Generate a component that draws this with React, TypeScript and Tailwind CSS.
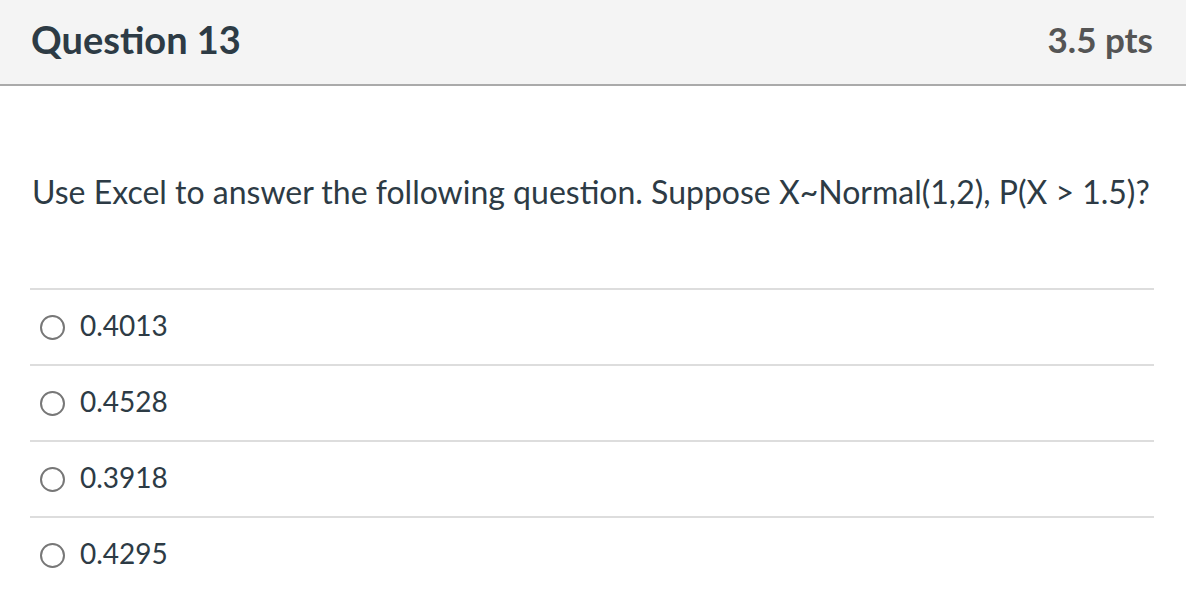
const options = ['0.4013', '0.4528', '0.3918', '0.4295'];

export default function App() {
  return (
    <div className="w-[1186px] h-[598px] bg-white overflow-hidden font-['Lato',sans-serif] text-[#2d3b45]">
      <div className="h-[86px] bg-[#f4f4f4] border-b-2 border-[#aaaaaa] flex items-center justify-between pl-[31px] pr-[33px] pb-[6px]">
        <h2 className="text-[38px] font-bold">Question 13</h2>
        <span className="text-[35px] font-bold text-[#555555]">3.5 pts</span>
      </div>
      <div className="pl-[30px] pr-[32px]">
        <p className="pt-[82px] pl-[2px] text-[32px] leading-[48px]">
          Use Excel to answer the following question. Suppose X~Normal(1,2), P(X &gt; 1.5)?
        </p>
        <div className="mt-[72px]">
          {options.map((o) => (
            <div key={o} className="h-[76px] border-t-2 border-[#dddddd] flex items-center">
              <span className="ml-[10px] w-[25px] h-[25px] rounded-full border-2 border-[#777777]" />
              <span className="ml-[15px] -mt-[4px] text-[28px]">{o}</span>
            </div>
          ))}
        </div>
      </div>
    </div>
  );
}
